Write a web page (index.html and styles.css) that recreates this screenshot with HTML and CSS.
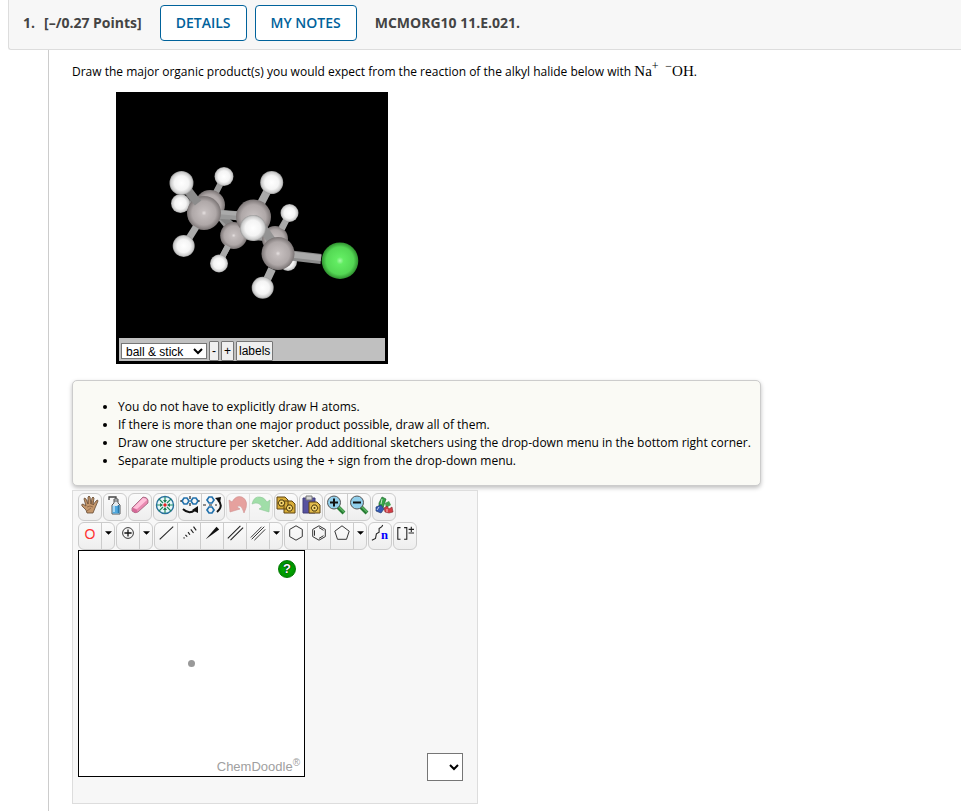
FILE: index.html
```
<!DOCTYPE html>
<html lang="en">
<head>
    <meta charset="UTF-8">
    <meta name="viewport" content="width=device-width, initial-scale=1.0">
    <title>MCMORG10 11.E.021.</title>
    <link rel="stylesheet" href="styles.css">
</head>
<body>

<header class="question-header">
    <span class="question-number">1.</span>
    <span class="question-points">[–/0.27 Points]</span>
    <button type="button" class="header-button">DETAILS</button>
    <button type="button" class="header-button">MY NOTES</button>
    <span class="question-name">MCMORG10 11.E.021.</span>
</header>

<main class="question-body">
    <p class="prompt">Draw the major organic product(s) you would expect from the reaction of the alkyl halide below with <span class="formula">Na<sup>+</sup> <sup class="minus">−</sup>OH</span>.</p>

    <div class="viewer">
        <svg class="molecule" viewBox="119 95 266 243" role="img" aria-label="Ball and stick model">
            <defs>
                <radialGradient id="hydrogen">
                    <stop offset="0" stop-color="#fff"/>
                    <stop offset="0.6" stop-color="#f4f4f4"/>
                    <stop offset="0.88" stop-color="#ccc"/>
                    <stop offset="1" stop-color="#999"/>
                </radialGradient>
                <radialGradient id="carbon">
                    <stop offset="0" stop-color="#e6e1e1"/>
                    <stop offset="0.15" stop-color="#c4bdbd"/>
                    <stop offset="0.7" stop-color="#afa8a8"/>
                    <stop offset="1" stop-color="#7a7474"/>
                </radialGradient>
                <radialGradient id="chlorine">
                    <stop offset="0" stop-color="#a5f8a5"/>
                    <stop offset="0.2" stop-color="#62ec62"/>
                    <stop offset="0.75" stop-color="#54d854"/>
                    <stop offset="1" stop-color="#2f902f"/>
                </radialGradient>
            </defs>
            <!-- back atoms -->
            <g stroke="#9c9c9c" stroke-width="6">
                <path d="M210 204L224 177M210 204L181 203M212 207L234 235M234 235L275 239M234 235L219 263M275 239L290 213M275 239L288 264"/>
            </g>
            <circle cx="180.500" cy="203.500" r="9.500" fill="url(#hydrogen)"/>
            <circle cx="224" cy="176.500" r="9.500" fill="url(#hydrogen)"/>
            <circle cx="210" cy="205" r="15" fill="url(#carbon)"/>
            <path d="M218 213L236 229" stroke="#858585" stroke-width="7"/>
            <circle cx="288" cy="262" r="9" fill="url(#hydrogen)"/>
            <circle cx="233.700" cy="235.500" r="13.500" fill="url(#carbon)"/>
            <circle cx="275" cy="239" r="13" fill="url(#carbon)"/>
            <path d="M282 229L289 215M228 246L220 261" stroke="#aaa" stroke-width="6"/>
            <circle cx="289.500" cy="213" r="9" fill="url(#hydrogen)"/>
            <circle cx="219" cy="263.500" r="9" fill="url(#hydrogen)"/>
            <!-- front atoms -->
            <path d="M204 213L182 183" stroke="#858585" stroke-width="8"/>
            <path d="M204 213L253 217" stroke="#999" stroke-width="9"/>
            <path d="M204 211L253 215" stroke="#aaa" stroke-width="4"/>
            <circle cx="204" cy="213" r="17" fill="url(#carbon)"/>
            <path d="M198 203L188 190" stroke="#8c8c8c" stroke-width="8"/>
            <circle cx="181.500" cy="183" r="12" fill="url(#hydrogen)"/>
            <path d="M196 227L186 243" stroke="#aaa" stroke-width="7"/>
            <circle cx="183.700" cy="246" r="11" fill="url(#hydrogen)"/>
            <path d="M257 211L271 184" stroke="#aaa" stroke-width="8"/>
            <circle cx="271.700" cy="182.500" r="11.500" fill="url(#hydrogen)"/>
            <circle cx="253.500" cy="217" r="17.500" fill="url(#carbon)"/>
            <path d="M262 227L276 247" stroke="#939393" stroke-width="9"/>
            <circle cx="253" cy="228" r="13" fill="url(#hydrogen)"/>
            <path d="M278 254L321 259" stroke="#8c8c8c" stroke-width="10"/>
            <path d="M278 253L321 258" stroke="#aaa" stroke-width="6"/>
            <circle cx="278" cy="253.500" r="16.500" fill="url(#carbon)"/>
            <path d="M272 269L264 286" stroke="#aaa" stroke-width="8"/>
            <circle cx="262.700" cy="287.700" r="11" fill="url(#hydrogen)"/>
            <circle cx="340" cy="260.700" r="18.300" fill="url(#chlorine)"/>
        </svg>
        <div class="viewer-bar">
            <select class="viewer-select" aria-label="Display style">
                <option>ball &amp; stick</option>
            </select>
            <button type="button" class="viewer-button">-</button>
            <button type="button" class="viewer-button">+</button>
            <button type="button" class="viewer-button">labels</button>
        </div>
    </div>

    <ul class="notes">
        <li>You do not have to explicitly draw H atoms.</li>
        <li>If there is more than one major product possible, draw all of them.</li>
        <li>Draw one structure per sketcher. Add additional sketchers using the drop-down menu in the bottom right corner.</li>
        <li>Separate multiple products using the + sign from the drop-down menu.</li>
    </ul>

    <section class="sketcher">
        <div class="toolbar">
            <div class="tool-group">
                <button type="button" class="tool" aria-label="Move">
                    <svg class="icon" viewBox="0 0 20 20"><path d="M7 18L6 15L2 11Q1 9 3 9L6 11L4 4Q4 2 6 4L8 9L8 2Q9 0 10 2L11 9L12 3Q13 1 14 3L13 10L16 6Q18 4 18 6L15 13L13 18Z" fill="#c4976c" stroke="#654a33" stroke-width=".8"/><path d="M7 12Q10 10 13 12M7 16L11 13M8 5V9M12 6V10" stroke="#81593b" fill="none" stroke-width=".7"/></svg>
                </button>
            </div>
            <div class="tool-group">
                <button type="button" class="tool" aria-label="Clear">
                    <svg class="icon" viewBox="0 0 20 20"><path d="M4 5V2H11V5" fill="none" stroke="#444" stroke-width="1.300"/><path d="M9 4H13V8L15 10V19H7V10L9 8Z" fill="#e4eaee" stroke="#555"/><path d="M7.500 11H14.500V18.500H7.500Z" fill="#4da8df"/><path d="M13.500 10V18" stroke="#2d78a8" stroke-width="1.500"/><path d="M9 10V17" stroke="#c4e7fa" stroke-width="1.500"/><path d="M9 6H13" stroke="#555"/></svg>
                </button>
            </div>
            <div class="tool-group">
                <button type="button" class="tool" aria-label="Erase">
                    <svg class="icon" viewBox="0 0 20 20"><path d="M2 13L13 2Q17 2 18 5L18 8L8 17Q5 19 2 16Z" fill="#e989b1" stroke="#8f526b" stroke-width=".7"/><path d="M3 13L13 3Q16 3 17 5L7 14Z" fill="#ffc1da"/><path d="M3 13L7 15V18Q4 18 2 15Z" fill="#d46997"/></svg>
                </button>
            </div>
            <div class="tool-group">
                <button type="button" class="tool" aria-label="Center">
                    <svg class="icon" viewBox="0 0 20 20"><circle cx="10" cy="10" r="8.500" fill="#e7f8fb" stroke="#28719c" stroke-width="1.400"/><path d="M10 2V7M10 13V18M2 10H7M13 10H18M4 4L8 8M16 4L12 8M4 16L8 12M16 16L12 12" stroke="#238a5e" stroke-width="1.200"/><path d="M8 5L10 8L12 5ZM8 15L10 12L12 15ZM5 8L8 10L5 12ZM15 8L12 10L15 12Z" fill="#217a57"/><circle cx="10" cy="10" r="1.700" fill="#e32525"/></svg>
                </button>
            </div>
            <div class="tool-group">
                <button type="button" class="tool" aria-label="Flip horizontal">
                    <svg class="icon" viewBox="0 0 20 20"><path d="M4 3H7L9 6L7 9H4L2 6ZM13 3H16L18 6L16 9H13L11 6Z" fill="none" stroke="#2372ad" stroke-width="1.700"/><path d="M0 6H2M18 6H20M10 1V4M10 8V11" stroke="#222" stroke-width="1.200"/><path d="M3 14Q9 20 15 15" fill="none" stroke="#111" stroke-width="2"/><path d="M18 11V18L12 15Z" fill="#111"/></svg>
                </button>
                <button type="button" class="tool" aria-label="Flip vertical">
                    <svg class="icon" viewBox="0 0 20 20"><path d="M6 2H9L11 5L9 8H6L4 5ZM6 12H9L11 15L9 18H6L4 15Z" fill="none" stroke="#2372ad" stroke-width="1.700"/><path d="M0 10H3M6 10H9M12 10H14" stroke="#222" stroke-width="1.200"/><path d="M14 17Q21 11 15 5" fill="none" stroke="#111" stroke-width="2"/><path d="M12 3L18 2L17 8Z" fill="#111"/></svg>
                </button>
            </div>
            <div class="tool-group disabled">
                <button type="button" class="tool" aria-label="Undo" disabled>
                    <svg class="icon" viewBox="0 0 20 20"><path d="M1 5L2 17L12 14L9 12Q13 8 16 18Q22 6 14 2Q8 0 4 7Z" fill="#d64d48" stroke="#a93330" stroke-width=".6"/></svg>
                </button>
                <button type="button" class="tool" aria-label="Redo" disabled>
                    <svg class="icon" viewBox="0 0 20 20"><path d="M19 5L18 17L8 14L11 12Q8 6 1 9Q3 1 9 2Q13 2 16 7Z" fill="#4cc65b" stroke="#2e9840" stroke-width=".6"/></svg>
                </button>
            </div>
            <div class="tool-group">
                <button type="button" class="tool" aria-label="Copy">
                    <svg class="icon" viewBox="0 0 20 20"><path d="M1 2H9L12 5V14H1ZM8 6H16L19 9V18H8Z" fill="#d8ad38" stroke="#5e4511"/><path d="M4 5H7L9 8L7 11H4L2 8ZM12 10H15L17 13L15 16H12L10 13Z" fill="#f5d66f" stroke="#49370d"/><circle cx="5.500" cy="8" r="1" fill="#49370d"/><circle cx="13.500" cy="13" r="1" fill="#49370d"/></svg>
                </button>
            </div>
            <div class="tool-group">
                <button type="button" class="tool" aria-label="Paste">
                    <svg class="icon" viewBox="0 0 20 20"><path d="M2 3H14V18H2Z" fill="#5651a0" stroke="#403c79"/><path d="M5 1H11V5H5Z" fill="#d5d5d5" stroke="#777"/><path d="M8 7H16L19 10V18H8Z" fill="#e1ba4c" stroke="#5e4511"/><path d="M12 10H15L17 13L15 16H12L10 13Z" fill="#f5d66f" stroke="#49370d"/><circle cx="13.500" cy="13" r="1" fill="#49370d"/></svg>
                </button>
            </div>
            <div class="tool-group">
                <button type="button" class="tool" aria-label="Zoom in">
                    <svg class="icon" viewBox="0 0 20 20"><path d="M12 12L18 18" stroke="#267b32" stroke-width="4"/><path d="M12 11L18 17" stroke="#58b15f" stroke-width="1.500"/><circle cx="8" cy="7.500" r="6.500" fill="#91cfeb" stroke="#555"/><path d="M4 7.500H12M8 3.500V11.500" stroke="#111" stroke-width="2"/></svg>
                </button>
                <button type="button" class="tool" aria-label="Zoom out">
                    <svg class="icon" viewBox="0 0 20 20"><path d="M12 12L18 18" stroke="#267b32" stroke-width="4"/><path d="M12 11L18 17" stroke="#58b15f" stroke-width="1.500"/><circle cx="8" cy="7.500" r="6.500" fill="#91cfeb" stroke="#555"/><path d="M4 7.500H12" stroke="#111" stroke-width="2"/></svg>
                </button>
            </div>
            <div class="tool-group">
                <button type="button" class="tool" aria-label="Clean up">
                    <svg class="icon" viewBox="0 0 20 20"><path d="M5 8L8 2L12 4L9 13H5Z" fill="#35a647" stroke="#286736" stroke-width=".7"/><path d="M2 12L7 10L10 14L7 18L2 16Z" fill="#345ab4" stroke="#263d73" stroke-width=".7"/><path d="M11 8L15 6L17 10L12 13Z" fill="#45a653"/><path d="M10 13L13 11L15 14L18 12L19 17L15 18L11 17Z" fill="#d43b43" stroke="#80282e" stroke-width=".6"/><path d="M8 4L7 9M5 12L3 15M13 14V17" stroke="#fff" opacity=".7"/></svg>
                </button>
            </div>
        </div>
        <div class="toolbar">
            <div class="tool-group">
                <button type="button" class="tool oxygen">O</button>
                <button type="button" class="tool caret" aria-label="More elements"><svg class="caret-icon" viewBox="0 0 8 6"><path d="M0 1H8L4 5Z"/></svg></button>
            </div>
            <div class="tool-group">
                <button type="button" class="tool" aria-label="Positive charge">
                    <svg class="icon" viewBox="0 0 20 20"><circle cx="10" cy="10" r="6" fill="none" stroke="#222"/><path d="M6 10H14M10 6V14" stroke="#111" stroke-width="1.400"/></svg>
                </button>
                <button type="button" class="tool caret" aria-label="More charges"><svg class="caret-icon" viewBox="0 0 8 6"><path d="M0 1H8L4 5Z"/></svg></button>
            </div>
            <div class="tool-group">
                <button type="button" class="tool" aria-label="Single bond">
                    <svg class="icon" viewBox="0 0 20 20"><path d="M3 17L18 3" stroke="#222" stroke-width="1.200"/></svg>
                </button>
                <button type="button" class="tool" aria-label="Recessed bond">
                    <svg class="icon" viewBox="0 0 20 20"><path d="M4 15L5 16M6 12L8 14M9 9L11 12M12 6L15 10M15 3L18 7" stroke="#222" stroke-width="1.300"/></svg>
                </button>
                <button type="button" class="tool" aria-label="Protruding bond">
                    <svg class="icon" viewBox="0 0 20 20"><path d="M3 17L15 3L18 6Z" fill="#111"/></svg>
                </button>
                <button type="button" class="tool" aria-label="Double bond">
                    <svg class="icon" viewBox="0 0 20 20"><path d="M2 16L16 2M5 18L19 4" stroke="#222" stroke-width="1.200"/></svg>
                </button>
                <button type="button" class="tool" aria-label="Triple bond">
                    <svg class="icon" viewBox="0 0 20 20"><path d="M2 15L14 3M3 17L17 3M6 18L18 6" stroke="#222"/></svg>
                </button>
                <button type="button" class="tool caret" aria-label="More bonds"><svg class="caret-icon" viewBox="0 0 8 6"><path d="M0 1H8L4 5Z"/></svg></button>
            </div>
            <div class="tool-group">
                <button type="button" class="tool" aria-label="Cyclohexane">
                    <svg class="icon" viewBox="0 0 20 20"><path d="M10 2L17 6V14L10 18L3 14V6Z" fill="none" stroke="#333" stroke-width="1.100"/></svg>
                </button>
                <button type="button" class="tool" aria-label="Benzene">
                    <svg class="icon" viewBox="0 0 20 20"><path d="M10 2L17 6V14L10 18L3 14V6ZM5 7V13M10 4L15 7M10 16L15 13" fill="none" stroke="#333" stroke-width="1.100"/></svg>
                </button>
                <button type="button" class="tool" aria-label="Cyclopentane">
                    <svg class="icon" viewBox="0 0 20 20"><path d="M10 2L18 8L15 17H5L2 8Z" fill="none" stroke="#333" stroke-width="1.100"/></svg>
                </button>
                <button type="button" class="tool caret" aria-label="More rings"><svg class="caret-icon" viewBox="0 0 8 6"><path d="M0 1H8L4 5Z"/></svg></button>
            </div>
            <div class="tool-group">
                <button type="button" class="tool" aria-label="Chain length">
                    <svg class="icon" viewBox="0 0 20 20"><path d="M1 18L5 16L6 11L9 9L9 5L12 3L13 1" fill="none" stroke="#222" stroke-width="1.200"/><text x="11" y="17" class="chain-label">n</text></svg>
                </button>
            </div>
            <div class="tool-group">
                <button type="button" class="tool" aria-label="Brackets">
                    <svg class="icon" viewBox="0 0 20 20"><path d="M5 4H2V17H5M9 4H12V17H9M14 6H20M17 3V9M14 10H20" fill="none" stroke="#222" stroke-width="1.200"/></svg>
                </button>
            </div>
        </div>
        <div class="sketch-row">
            <div class="canvas">
                <button type="button" class="help" aria-label="Help">?</button>
                <span class="start-dot"></span>
                <span class="brand">ChemDoodle<sup>®</sup></span>
            </div>
            <select class="add-select" aria-label="Add sketcher or operator">
                <option></option>
            </select>
        </div>
    </section>
</main>

</body>
</html>
```
FILE: styles.css
```
* {
    box-sizing: border-box;
}

body {
    margin: 0;
    padding-left: 8px;
    min-height: 100vh;
    display: flex;
    flex-direction: column;
    background-color: #fff;
    color: #000;
    font-family: "Open Sans", sans-serif;
    font-size: 12px;
    line-height: 18px;
}

button,
select {
    margin: 0;
    padding: 0;
    font-family: inherit;
    color: #000;
}

.question-header {
    display: flex;
    align-items: center;
    min-height: 50px;
    padding: 0 14px 4px;
    background-color: #f7f7f7;
    border-left: 1px solid #ddd;
    border-bottom: 1px solid #ddd;
    border-bottom-left-radius: 3px;
    color: #444;
    font-size: 14px;
    font-weight: 700;
}

.question-points {
    margin: 0 18px 0 9px;
}

.header-button {
    height: 36px;
    padding: 0 15px;
    margin-right: 8px;
    border: 1px solid #00629b;
    border-radius: 4px;
    background-color: #fff;
    color: #00629b;
    font-size: 14px;
    font-weight: 600;
}

.question-name {
    margin-left: 10px;
}

.question-body {
    flex: 1;
    margin-left: 40px;
    padding: 13px 23px 7px;
    border-left: 1px solid #ccc;
}

.prompt {
    margin: 0 0 11px;
}

.formula {
    font-family: "Liberation Serif", serif;
    font-size: 15px;
    line-height: 12px;
}

.formula sup {
    font-size: 12px;
    line-height: 0;
}

.formula .minus {
    margin-left: 3px;
}

/* 3D molecule viewer */
.viewer {
    width: 272px;
    max-width: 100%;
    margin: 0 0 16px 44px;
    border: 3px solid #000;
    background-color: #000;
}

.molecule {
    display: block;
    width: 100%;
}

.viewer-bar {
    display: flex;
    align-items: center;
    gap: 2px;
    padding: 3px 2px 0;
    background-color: #c0c0c0;
    font-family: "Liberation Sans", sans-serif;
}

.viewer-select {
    width: 86px;
    height: 16px;
    border: 1px solid #767676;
    border-radius: 0;
    background-color: #fff;
    font-size: 12px;
}

.viewer-button {
    height: 20px;
    padding: 0 2px;
    border: 1px solid #767676;
    border-radius: 1px;
    background-color: #efefef;
    font-size: 12px;
}

.notes {
    width: fit-content;
    max-width: 100%;
    margin: 0 0 4px;
    padding: 17px 9px 15px 45px;
    border: 1px solid #ccc;
    border-radius: 5px;
    background-color: #fafaf5;
    box-shadow: 0 2px 4px rgba(0, 0, 0, 0.25);
}

/* structure sketcher */
.sketcher {
    width: 406px;
    max-width: 100%;
    padding: 2px 14px 22px 5px;
    border: 1px solid #ddd;
    background-color: #f7f7f7;
}

.toolbar {
    display: flex;
    gap: 1px;
    margin-bottom: 1px;
}

.toolbar + .toolbar {
    margin-bottom: 0;
}

.tool-group {
    display: flex;
    height: 28px;
    border: 1px solid #ccc;
    border-radius: 6px;
    background: linear-gradient(#fbfbfb, #eee);
    overflow: hidden;
}

.tool-group.disabled {
    opacity: 0.5;
}

.tool {
    display: flex;
    justify-content: center;
    width: 22px;
    padding-top: 1px;
    border: 0;
    background: transparent;
}

.tool + .tool {
    width: 23px;
    border-left: 1px solid #ccc;
}

.tool + .caret {
    width: 13px;
    padding-top: 7px;
}

.icon {
    width: 20px;
    height: 20px;
    flex: none;
}

.toolbar + .toolbar .icon {
    height: 18px;
}

.caret-icon {
    width: 7px;
    height: 6px;
    flex: none;
}

.oxygen {
    color: #f33;
    font-family: "Liberation Sans", sans-serif;
    font-size: 14px;
    line-height: 20px;
}

.chain-label {
    fill: #00f;
    font-family: "Liberation Serif", serif;
    font-size: 14px;
    font-weight: 700;
}

.sketch-row {
    display: flex;
    justify-content: space-between;
    align-items: flex-end;
}

.canvas {
    display: grid;
    grid-template-rows: 1fr auto 1fr;
    width: 227px;
    height: 227px;
    margin-bottom: 4px;
    border: 1px solid #000;
    background-color: #fff;
}

.help {
    justify-self: end;
    width: 18px;
    height: 18px;
    margin: 9px 8px 0 0;
    border: 1px solid #007a00;
    border-radius: 50%;
    background: radial-gradient(#0b0, #008000);
    color: #fff;
    font-family: "Liberation Sans", sans-serif;
    font-size: 13px;
    font-weight: 700;
    line-height: 14px;
    text-shadow: 0 0 2px #000, 0 0 1px #000;
}

.start-dot {
    justify-self: center;
    width: 7px;
    height: 7px;
    border-radius: 50%;
    background-color: #999;
}

.brand {
    align-self: end;
    justify-self: end;
    margin-right: 4px;
    color: #a0a0a0;
    font-family: "Liberation Sans", sans-serif;
    font-size: 13px;
    line-height: 18px;
}

.brand sup {
    font-size: 10px;
    line-height: 0;
}

.add-select {
    width: 36px;
    height: 28px;
    border: 1px solid #767676;
    border-radius: 0;
    background-color: #fff;
}
```
